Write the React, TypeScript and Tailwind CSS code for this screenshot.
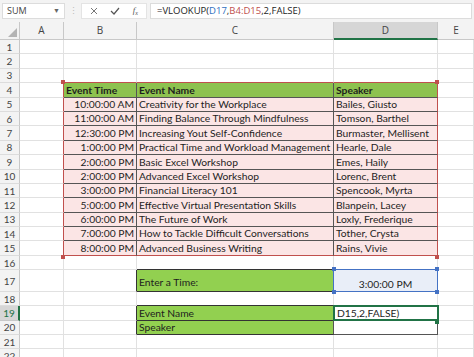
import type { ReactNode } from "react";

const events = [
  ["10:00:00 AM", "Creativity for the Workplace", "Bailes, Giusto"],
  ["11:00:00 AM", "Finding Balance Through Mindfulness", "Tomson, Barthel"],
  ["12:30:00 PM", "Increasing Yout Self-Confidence", "Burmaster, Mellisent"],
  ["1:00:00 PM", "Practical Time and Workload Management", "Hearle, Dale"],
  ["2:00:00 PM", "Basic Excel Workshop", "Emes, Haily"],
  ["2:00:00 PM", "Advanced Excel Workshop", "Lorenc, Brent"],
  ["3:00:00 PM", "Financial Literacy 101", "Spencook, Myrta"],
  ["5:00:00 PM", "Effective Virtual Presentation Skills", "Blanpein, Lacey"],
  ["6:00:00 PM", "The Future of Work", "Loxly, Frederique"],
  ["7:00:00 PM", "How to Tackle Difficult Conversations", "Tother, Crysta"],
  ["8:00:00 PM", "Advanced Business Writing", "Rains, Vivie"],
];

const GRID = "border-r-[#e1e1e1] border-b-[#e1e1e1]";

function Cell({
  w,
  cls = GRID,
  children,
}: {
  w: string;
  cls?: string;
  children?: ReactNode;
}) {
  return (
    <div
      className={`${w} shrink-0 border-r border-b flex items-end overflow-hidden whitespace-nowrap px-[2px] pb-[1px] leading-[12px] ${cls}`}
    >
      {children}
    </div>
  );
}

function RowHead({ n, active }: { n: number; active?: boolean }) {
  return (
    <div
      className={
        active
          ? "w-[20px] shrink-0 flex items-center justify-center border-b border-b-[#c8c8c8] border-r-2 border-r-[#217346] bg-[#d6d6d6] text-[10px] leading-[12px] text-[#217346]"
          : "w-[20px] shrink-0 flex items-center justify-center border-b border-b-[#dcdcdc] border-r border-r-[#c8c8c8] bg-[#f3f3f3] text-[10px] leading-[12px] text-[#444]"
      }
    >
      {n}
    </div>
  );
}

function Handle({ cls }: { cls: string }) {
  return <div className={`absolute w-[4px] h-[4px] ${cls}`} />;
}

export default function App() {
  return (
    <div className="w-[474px] h-[357px] overflow-hidden bg-white font-['Lato','Liberation_Sans',sans-serif] text-[10.3px] text-[#1e1e1e]">
      {/* formula bar */}
      <div className="h-[22px] flex items-center gap-[3px] bg-[#f3f3f3] px-[2px] font-['Open_Sans','Liberation_Sans',sans-serif]">
        <div className="w-[63px] h-[16px] bg-white border border-[#dcdcdc] flex items-center justify-between px-[4px] text-[9px] text-[#444]">
          <span>SUM</span>
          <span className="text-[7px] text-[#666]">▼</span>
        </div>
        <div className="w-[10px] flex justify-center text-[9px] text-[#bbb]">⋮</div>
        <div className="w-[66px] h-[16px] bg-white border border-[#e4e4e4] flex items-center justify-around px-[2px] text-[#666]">
          <svg width="8" height="8" viewBox="0 0 8 8" stroke="#777" strokeWidth="1">
            <path d="M1 1L7 7M7 1L1 7" />
          </svg>
          <svg width="10" height="8" viewBox="0 0 10 8" fill="none" stroke="#555" strokeWidth="1.2">
            <path d="M1 4L4 7L9 1" />
          </svg>
          <span className="italic font-['Liberation_Serif',serif] text-[9px] text-[#555]">
            f<sub className="text-[6px]">x</sub>
          </span>
        </div>
        <div className="flex-1 h-[16px] bg-white border border-[#dcdcdc] flex items-center px-[6px] text-[9.5px]">
          <span>=VLOOKUP(</span>
          <span className="text-[#2f6fc0]">D17</span>
          <span>,</span>
          <span className="text-[#c0504d]">B4:D15</span>
          <span>,2,FALSE)</span>
        </div>
      </div>

      {/* column headers */}
      <div className="h-[18px] flex bg-[#f3f3f3] text-[10px] text-[#444] font-['Open_Sans','Liberation_Sans',sans-serif]">
        <div className="w-[20px] shrink-0 border-r border-b border-[#c8c8c8] relative">
          <svg className="absolute right-[2px] bottom-[2px]" width="9" height="9" viewBox="0 0 9 9">
            <path d="M9 0V9H0Z" fill="#b4b4b4" />
          </svg>
        </div>
        <div className="w-[44px] shrink-0 border-r border-b border-[#c8c8c8] flex items-center justify-center">A</div>
        <div className="w-[73px] shrink-0 border-r border-b border-[#c8c8c8] flex items-center justify-center">B</div>
        <div className="w-[197px] shrink-0 border-r border-b border-[#c8c8c8] flex items-center justify-center">C</div>
        <div className="w-[104px] shrink-0 border-r border-r-[#c8c8c8] border-b-2 border-b-[#217346] bg-[#d6d6d6] flex items-center justify-center">D</div>
        <div className="flex-1 border-b border-[#c8c8c8] flex items-center justify-center">E</div>
      </div>

      {/* rows 1-2 */}
      {[1, 2].map((n) => (
        <div key={n} className="h-[14.4px] flex">
          <RowHead n={n} />
          <Cell w="w-[44px]" />
          <Cell w="w-[73px]" />
          <Cell w="w-[197px]" />
          <Cell w="w-[104px]" />
          <Cell w="flex-1" />
        </div>
      ))}

      {/* row 3 */}
      <div className="h-[14.4px] flex">
        <RowHead n={3} />
        <Cell w="w-[44px]" />
        <Cell w="w-[73px]" cls="border-r-[#e1e1e1] border-b-[#c0504d]" />
        <Cell w="w-[197px]" cls="border-r-[#e1e1e1] border-b-[#c0504d]" />
        <Cell w="w-[104px]" cls="border-r-[#e1e1e1] border-b-[#c0504d]" />
        <Cell w="flex-1" />
      </div>

      {/* row 4: table header */}
      <div className="h-[14.4px] flex relative">
        <RowHead n={4} />
        <Cell w="w-[44px]" cls="border-r-[#c0504d] border-b-[#e1e1e1]" />
        <Cell w="w-[73px]" cls="border-r-[#555] border-b-[#555] bg-[#8dc24f] font-bold">Event Time</Cell>
        <Cell w="w-[197px]" cls="border-r-[#555] border-b-[#555] bg-[#8dc24f] font-bold">Event Name</Cell>
        <Cell w="w-[104px]" cls="border-r-[#c0504d] border-b-[#555] bg-[#8dc24f] font-bold">Speaker</Cell>
        <Cell w="flex-1" />
        <Handle cls="left-[61px] -top-[3px] bg-[#c0504d]" />
        <Handle cls="left-[435px] -top-[3px] bg-[#c0504d]" />
      </div>

      {/* rows 5-15 */}
      {events.map(([t, name, sp], i) => {
        const last = i === events.length - 1;
        return (
          <div key={i} className="h-[14.4px] flex relative">
            <RowHead n={i + 5} />
            <Cell w="w-[44px]" cls="border-r-[#c0504d] border-b-[#e1e1e1]" />
            <Cell
              w="w-[73px]"
              cls={last ? "border-r-[#555] border-b-[#c0504d] bg-[#fbe5e5] justify-end" : "border-r-[#555] border-b-[#555] bg-[#fbe5e5] justify-end"}
            >
              {t}
            </Cell>
            <Cell
              w="w-[197px]"
              cls={last ? "border-r-[#555] border-b-[#c0504d] bg-[#fbe5e5]" : "border-r-[#555] border-b-[#555] bg-[#fbe5e5]"}
            >
              {name}
            </Cell>
            <Cell
              w="w-[104px]"
              cls={last ? "border-r-[#c0504d] border-b-[#c0504d] bg-[#fbe5e5]" : "border-r-[#c0504d] border-b-[#555] bg-[#fbe5e5]"}
            >
              {sp}
            </Cell>
            <Cell w="flex-1" />
            {last && <Handle cls="left-[61px] -bottom-[3px] bg-[#c0504d]" />}
            {last && <Handle cls="left-[435px] -bottom-[3px] bg-[#c0504d]" />}
          </div>
        );
      })}

      {/* row 16 */}
      <div className="h-[14.4px] flex">
        <RowHead n={16} />
        <Cell w="w-[44px]" />
        <Cell w="w-[73px]" />
        <Cell w="w-[197px]" cls="border-r-[#e1e1e1] border-b-[#333]" />
        <Cell w="w-[104px]" cls="border-r-[#e1e1e1] border-b-[#4472c4]" />
        <Cell w="flex-1" />
      </div>

      {/* row 17 */}
      <div className="h-[21.6px] flex relative">
        <RowHead n={17} />
        <Cell w="w-[44px]" />
        <Cell w="w-[73px]" cls="border-r-[#333] border-b-[#e1e1e1]" />
        <Cell w="w-[197px]" cls="border-r-[#4472c4] border-b-[#333] bg-[#92d050] pb-[3px]">Enter a Time:</Cell>
        <Cell w="w-[104px]" cls="border-r-[#4472c4] border-b-[#4472c4] bg-[#e9eef8] items-center justify-center">
          3:00:00 PM
        </Cell>
        <Cell w="flex-1" />
        <Handle cls="left-[332px] -top-[3px] bg-[#4472c4]" />
        <Handle cls="left-[435px] -top-[3px] bg-[#4472c4]" />
        <Handle cls="left-[332px] -bottom-[2px] bg-[#4472c4]" />
        <Handle cls="left-[435px] -bottom-[2px] bg-[#4472c4]" />
      </div>

      {/* row 18 */}
      <div className="h-[14.4px] flex">
        <RowHead n={18} />
        <Cell w="w-[44px]" />
        <Cell w="w-[73px]" />
        <Cell w="w-[197px]" cls="border-r-[#e1e1e1] border-b-[#333]" />
        <Cell w="w-[104px]" cls="border-r-[#e1e1e1] border-b-[#217346]" />
        <Cell w="flex-1" />
      </div>

      {/* row 19 */}
      <div className="h-[14.4px] flex relative">
        <RowHead n={19} active />
        <Cell w="w-[44px]" />
        <Cell w="w-[73px]" cls="border-r-[#333] border-b-[#e1e1e1]" />
        <Cell w="w-[197px]" cls="border-r-[#217346] border-b-[#333] bg-[#92d050]">Event Name</Cell>
        <Cell w="w-[104px]" cls="border-r-[#217346] border-b-[#217346] pl-[3px]">D15,2,FALSE)</Cell>
        <Cell w="flex-1" />
        <div className="absolute left-[333px] top-[-1px] w-[106px] h-[16px] border-2 border-[#217346] pointer-events-none" />
        <Handle cls="left-[435px] -bottom-[3px] bg-[#217346]" />
      </div>

      {/* row 20 */}
      <div className="h-[14.4px] flex">
        <RowHead n={20} />
        <Cell w="w-[44px]" />
        <Cell w="w-[73px]" cls="border-r-[#333] border-b-[#e1e1e1]" />
        <Cell w="w-[197px]" cls="border-r-[#555] border-b-[#333] bg-[#92d050]">Speaker</Cell>
        <Cell w="w-[104px]" cls="border-r-[#555] border-b-[#555]" />
        <Cell w="flex-1" />
      </div>

      {/* rows 21-22 */}
      {[21, 22].map((n) => (
        <div key={n} className="h-[14.4px] flex">
          <RowHead n={n} />
          <Cell w="w-[44px]" />
          <Cell w="w-[73px]" />
          <Cell w="w-[197px]" />
          <Cell w="w-[104px]" />
          <Cell w="flex-1" />
        </div>
      ))}
    </div>
  );
}
